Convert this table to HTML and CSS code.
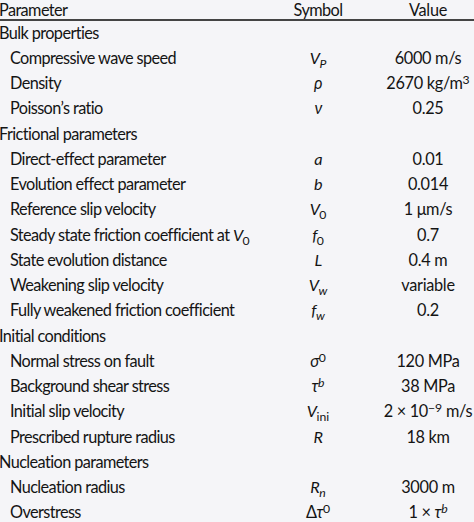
FILE: index.html
```html
<!DOCTYPE html>
<html>
<head>
<meta charset="utf-8">
<link rel="stylesheet" href="styles.css">
</head>
<body>
<table class="params">
  <colgroup><col class="c-param"><col class="c-sym"><col class="c-val"></colgroup>
  <thead>
    <tr class="head"><th class="param">Parameter</th><th class="sym">Symbol</th><th class="val">Value</th></tr>
  </thead>
  <tbody>
    <tr class="group"><td colspan="3">Bulk properties</td></tr>
    <tr><td class="item">Compressive wave speed</td><td class="sym"><i>V</i><sub><i>P</i></sub></td><td class="val">6000 m/s</td></tr>
    <tr><td class="item">Density</td><td class="sym"><i>ρ</i></td><td class="val">2670 kg/m<sup>3</sup></td></tr>
    <tr><td class="item">Poisson’s ratio</td><td class="sym"><i>ν</i></td><td class="val">0.25</td></tr>
    <tr class="group"><td colspan="3">Frictional parameters</td></tr>
    <tr><td class="item">Direct-effect parameter</td><td class="sym"><i>a</i></td><td class="val">0.01</td></tr>
    <tr><td class="item">Evolution effect parameter</td><td class="sym"><i>b</i></td><td class="val">0.014</td></tr>
    <tr><td class="item">Reference slip velocity</td><td class="sym"><i>V</i><sub>0</sub></td><td class="val">1 μm/s</td></tr>
    <tr><td class="item">Steady state friction coefficient at <i>V</i><sub>0</sub></td><td class="sym"><i>f</i><sub>0</sub></td><td class="val">0.7</td></tr>
    <tr><td class="item">State evolution distance</td><td class="sym"><i>L</i></td><td class="val">0.4 m</td></tr>
    <tr><td class="item">Weakening slip velocity</td><td class="sym"><i>V</i><sub><i>w</i></sub></td><td class="val">variable</td></tr>
    <tr><td class="item">Fully weakened friction coefficient</td><td class="sym"><i>f</i><sub><i>w</i></sub></td><td class="val">0.2</td></tr>
    <tr class="group"><td colspan="3">Initial conditions</td></tr>
    <tr><td class="item">Normal stress on fault</td><td class="sym"><i>σ</i><sup>0</sup></td><td class="val">120 MPa</td></tr>
    <tr><td class="item">Background shear stress</td><td class="sym"><i>τ</i><sup><i>b</i></sup></td><td class="val">38 MPa</td></tr>
    <tr><td class="item">Initial slip velocity</td><td class="sym"><i>V</i><sub>ini</sub></td><td class="val">2 × 10<sup>−9</sup> m/s</td></tr>
    <tr><td class="item">Prescribed rupture radius</td><td class="sym"><i>R</i></td><td class="val">18 km</td></tr>
    <tr class="group"><td colspan="3">Nucleation parameters</td></tr>
    <tr><td class="item">Nucleation radius</td><td class="sym"><i>R</i><sub><i>n</i></sub></td><td class="val">3000 m</td></tr>
    <tr><td class="item">Overstress</td><td class="sym">Δ<i>τ</i><sup>0</sup></td><td class="val">1 × <i>τ</i><sup><i>b</i></sup></td></tr>
  </tbody>
</table>
</body>
</html>
```
FILE: styles.css
```css
html, body {
  margin: 0;
  padding: 0;
  background: #f5f5f8;
  overflow: hidden;
}
body {
  width: 474px;
  height: 522px;
  font-family: "Lato", "Noto Sans", "DejaVu Sans", sans-serif;
  font-size: 16.3px;
  letter-spacing: -0.6px;
  color: #141414;
}
.params {
  border-collapse: collapse;
  margin-left: -2px;
  width: 492px;
  table-layout: fixed;
}
.c-param { width: 272px; }
.c-sym { width: 96px; }
.c-val { width: 124px; }
th, td {
  padding: 0;
  white-space: nowrap;
  font-weight: normal;
}
.head th {
  height: 19px;
  line-height: 19px;
  border-bottom: 2px solid #444;
  vertical-align: middle;
}
th.param, .group td {
  text-align: left;
  padding-left: 1px;
}
tbody tr {
  height: 25.25px;
}
tbody td {
  line-height: 20px;
  vertical-align: middle;
}
.item { padding-left: 12px; }
.sym, .val { text-align: center; }
.val { letter-spacing: -0.3px; }
sub, sup {
  font-size: 0.75em;
  line-height: 0;
  letter-spacing: 0;
}
sub { vertical-align: -0.35em; }
sup { vertical-align: 0.45em; }
```
